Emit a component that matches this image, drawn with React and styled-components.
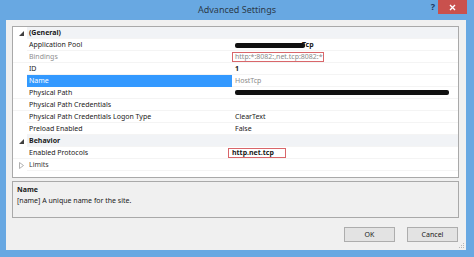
import React from 'react'
import styled, {createGlobalStyle} from 'styled-components'

const GlobalStyle = createGlobalStyle`
    html, body {
        margin: 0;
        padding: 0;
        background: #68a8e2;
    }
    * {
        box-sizing: border-box;
    }
`

const rows = [
    {type: 'group', name: '(General)'},
    {name: 'Application Pool', value: 'Tcp', redact: 70, bold: true},
    {name: 'Bindings', value: 'http:*:8082:,net.tcp:8082:*', dim: true, boxed: 'bindings'},
    {name: 'ID', value: '1', bold: true},
    {name: 'Name', value: 'HostTcp', selected: true},
    {name: 'Physical Path', redact: 214},
    {name: 'Physical Path Credentials'},
    {name: 'Physical Path Credentials Logon Type', value: 'ClearText'},
    {name: 'Preload Enabled', value: 'False'},
    {type: 'group', name: 'Behavior'},
    {name: 'Enabled Protocols', value: 'http.net.tcp', bold: true, boxed: 'protocols'},
    {type: 'collapsed', name: 'Limits'},
]

const App = () => {
    return (
        <>
            <GlobalStyle />
            <Window>
                <TitleBar>
                    <span />
                    <Title>Advanced Settings</Title>
                    <Controls>
                        <Help>?</Help>
                        <Close>
                            <svg width="7" height="7" viewBox="0 0 7 7">
                                <path d="M1 1 L6 6 M6 1 L1 6" stroke="#fff" strokeWidth="1.4" />
                            </svg>
                        </Close>
                    </Controls>
                </TitleBar>
                <Client>
                    <Grid>
                        {rows.map((row, i) => {
                            if (row.type === 'group' || row.type === 'collapsed') {
                                return (
                                    <Row key={i} $group={row.type === 'group'}>
                                        <Margin>
                                            {row.type === 'group' ? (
                                                <svg width="5" height="5" viewBox="0 0 5 5">
                                                    <polygon points="5,0 5,5 0,5" fill="#404040" />
                                                </svg>
                                            ) : (
                                                <svg width="5" height="7" viewBox="0 0 5 7">
                                                    <polygon points="0.5,0.5 4.5,3.5 0.5,6.5" fill="none" stroke="#a8a8a8" strokeWidth="0.9" />
                                                </svg>
                                            )}
                                        </Margin>
                                        <GroupName $bold={row.type === 'group'}>{row.name}</GroupName>
                                    </Row>
                                )
                            }
                            return (
                                <Row key={i}>
                                    <Margin />
                                    <NameCell $selected={row.selected} $dim={row.dim}>{row.name}</NameCell>
                                    <ValueCell $bold={row.bold} $dim={row.dim || row.selected}>
                                        {row.redact && <Redact $w={row.redact} />}
                                        {row.boxed ? (
                                            <Boxed $kind={row.boxed}>{row.value}</Boxed>
                                        ) : (
                                            row.value
                                        )}
                                    </ValueCell>
                                </Row>
                            )
                        })}
                    </Grid>
                    <Description>
                        <DescTitle>Name</DescTitle>
                        <DescText>[name] A unique name for the site.</DescText>
                    </Description>
                    <Buttons>
                        <Button>OK</Button>
                        <Button>Cancel</Button>
                    </Buttons>
                    <Grip width="6" height="6" viewBox="0 0 6 6">
                        <rect x="4" y="0" width="1" height="1" fill="#b8b8b8" />
                        <rect x="2" y="2" width="1" height="1" fill="#b8b8b8" />
                        <rect x="4" y="2" width="1" height="1" fill="#b8b8b8" />
                        <rect x="0" y="4" width="1" height="1" fill="#b8b8b8" />
                        <rect x="2" y="4" width="1" height="1" fill="#b8b8b8" />
                        <rect x="4" y="4" width="1" height="1" fill="#b8b8b8" />
                    </Grip>
                </Client>
            </Window>
        </>
    )
}

export default App;

const Window = styled.div`
    width: 474px;
    height: 257px;
    background: #68a8e2;
    display: flex;
    flex-direction: column;
    font-family: 'Noto Sans', 'Open Sans', sans-serif;
`

const TitleBar = styled.div`
    height: 20px;
    display: grid;
    grid-template-columns: 1fr auto 1fr;
    align-items: start;
`

const Title = styled.div`
    font-size: 9px;
    color: #2b3a4a;
    line-height: 20px;
`

const Controls = styled.div`
    display: flex;
    justify-content: flex-end;
    align-items: flex-start;
    gap: 3px;
    padding-right: 7px;
`

const Help = styled.span`
    font-size: 9px;
    font-weight: 700;
    color: #1e3b66;
    line-height: 14px;
`

const Close = styled.div`
    width: 29px;
    height: 14px;
    background: #c9514d;
    display: flex;
    align-items: center;
    justify-content: center;
`

const Client = styled.div`
    position: relative;
    margin: 0 8px 7px 6px;
    flex: 1;
    background: #f0f0f0;
    padding: 6px 7px 0 6px;
    display: flex;
    flex-direction: column;
`

const Grid = styled.div`
    height: 152px;
    border: 1px solid #a9a9a9;
    background: #fff;
    display: flex;
    flex-direction: column;
`

const Row = styled.div`
    height: 12px;
    flex: none;
    display: grid;
    grid-template-columns: 14px 205px 1fr;
    align-items: center;
    font-size: 7px;
    line-height: 12px;
    color: #1a1a1a;
    background: ${p => (p.$group ? '#f1f3f6' : '#fff')};
    border-bottom: 1px solid #f4f4f4;
`

const Margin = styled.div`
    display: flex;
    align-items: center;
    justify-content: flex-end;
    padding-right: 3px;
    height: 100%;
    background: #fff;
`

const GroupName = styled.div`
    grid-column: 2 / 4;
    padding-left: 2px;
    font-weight: ${p => (p.$bold ? 700 : 400)};
    color: ${p => (p.$bold ? '#1a1a1a' : '#3a3a3a')};
`

const NameCell = styled.div`
    height: 100%;
    padding-left: 2px;
    background: ${p => (p.$selected ? '#3399ff' : 'transparent')};
    color: ${p => (p.$selected ? '#fff' : p.$dim ? '#8f8f8f' : '#1a1a1a')};
    white-space: nowrap;
    overflow: hidden;
`

const ValueCell = styled.div`
    display: flex;
    align-items: center;
    height: 100%;
    padding-left: 3px;
    white-space: nowrap;
    font-weight: ${p => (p.$bold ? 700 : 400)};
    color: ${p => (p.$dim ? '#8a8a8a' : '#1a1a1a')};
`

const Redact = styled.span`
    display: inline-block;
    width: ${p => p.$w}px;
    height: 5px;
    border-radius: 2px;
    background: #111;
    margin-right: -3px;
`

const Boxed = styled.span`
    display: inline-block;
    height: 10px;
    line-height: 8px;
    border: 1px solid #d9666a;
    padding: 0 ${p => (p.$kind === 'protocols' ? '10px 0 3px' : '3px 0 2px')};
    margin-left: ${p => (p.$kind === 'protocols' ? '-7px' : '-3px')};
    width: ${p => (p.$kind === 'protocols' ? '58px' : '92px')};
`

const Description = styled.div`
    margin-top: 3px;
    height: 37px;
    border: 1px solid #a9a9a9;
    padding: 2px 4px;
    font-size: 7px;
    line-height: 11px;
    color: #1a1a1a;
`

const DescTitle = styled.div`
    font-weight: 700;
`

const DescText = styled.div``

const Buttons = styled.div`
    margin-top: 9px;
    display: flex;
    justify-content: flex-end;
    gap: 12px;
    padding-right: 1px;
`

const Button = styled.div`
    width: 51px;
    height: 15px;
    background: #e3e3e3;
    border: 1px solid #adadad;
    font-size: 7px;
    line-height: 13px;
    text-align: center;
    color: #1a1a1a;
`

const Grip = styled.svg`
    position: absolute;
    right: 1px;
    bottom: 1px;
`
